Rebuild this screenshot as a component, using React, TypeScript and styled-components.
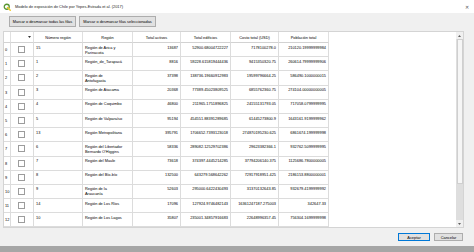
import { Fragment } from 'react';
import styled, { createGlobalStyle } from 'styled-components';

const GlobalStyle = createGlobalStyle`
  html, body {
    margin: 0;
    padding: 0;
    background: #a6a6a6;
  }
  body {
    font-family: "Liberation Sans", Arial, sans-serif;
    color: #000;
  }
  * {
    box-sizing: border-box;
  }
`;

const Window = styled.div`
  width: 474px;
  height: 246px;
  display: flex;
  flex-direction: column;
  background: #f0f0f0;
`;

const TitleBar = styled.div`
  height: 13px;
  display: flex;
  align-items: center;
  gap: 4px;
  padding: 0 5px 0 3px;
  background: #fff;
  font-size: 3.9px;
  color: #1a1a1a;
`;

const Title = styled.span`
  flex: 1;
`;

const CloseGlyph = styled.span`
  font-size: 5px;
  color: #555;
`;

const Toolbar = styled.div`
  height: 18px;
  display: flex;
  align-items: flex-start;
  gap: 3px;
  padding: 3px 0 0 9px;
`;

const Button = styled.button<{ $w: number; $h: number; $primary?: boolean }>`
  width: ${p => p.$w}px;
  height: ${p => p.$h}px;
  padding: 0;
  margin: 0;
  font-family: inherit;
  font-size: 3.9px;
  color: #000;
  background: #e1e1e1;
  border: 1px solid ${p => (p.$primary ? '#0078d7' : '#adadad')};
  border-radius: 0;
`;

const TableFrame = styled.div`
  height: 197px;
  margin: 0 10px 0 3px;
  display: flex;
  background: #fff;
  border: 1px solid #d4d4d4;
`;

const GridArea = styled.div`
  flex: 1;
  overflow: hidden;
`;

const Grid = styled.div`
  display: grid;
  grid-template-columns: 7px 23px 49px 50px 48px 50px 48px 50px;
  grid-template-rows: 11px;
  grid-auto-rows: 14.2px;
  width: 325px;
  font-size: 3.9px;
  line-height: 5px;
`;

const HeadCell = styled.div`
  display: flex;
  align-items: center;
  justify-content: center;
  position: relative;
  border-right: 1px solid #e0e0e0;
  border-bottom: 1px solid #d2d2d2;
  white-space: nowrap;
  overflow: hidden;
`;

const SortArrow = styled.svg`
  position: absolute;
  right: 2px;
  top: 4px;
`;

const Cell = styled.div<{ $align?: 'left' | 'right' }>`
  padding: 1.6px 2px 0 2px;
  text-align: ${p => p.$align ?? 'left'};
  border-right: 1px solid #dcdcdc;
  border-bottom: 1px solid #dcdcdc;
  white-space: pre;
  overflow: hidden;
`;

const RowHead = styled.div`
  display: flex;
  align-items: center;
  padding-left: 1px;
  border-right: 1px solid #dcdcdc;
  border-bottom: 1px solid #dcdcdc;
`;

const CheckCell = styled.div`
  display: flex;
  align-items: center;
  justify-content: center;
  padding-right: 2px;
  border-right: 1px solid #dcdcdc;
  border-bottom: 1px solid #dcdcdc;
`;

const CheckBox = styled.span`
  width: 7px;
  height: 7px;
  background: #fff;
  border: 1px solid #9c9c9c;
`;

const Scrollbar = styled.div`
  width: 7px;
  display: flex;
  flex-direction: column;
  background: #dedede;
`;

const ScrollArrow = styled.div`
  height: 7px;
  display: flex;
  align-items: center;
  justify-content: center;
  background: #f0f0f0;
`;

const Thumb = styled.div`
  height: 145px;
  background: #f6f6f6;
  border: 1px solid #cfcfcf;
  margin: 0 0.5px;
`;

const Track = styled.div`
  flex: 1;
`;

const Footer = styled.div`
  flex: 1;
  display: flex;
  justify-content: flex-end;
  align-items: flex-start;
  gap: 4px;
  padding: 5px 11px 0 0;
`;

const QgisIcon = () => (
  <svg width="8" height="8" viewBox="0 0 16 16">
    <circle cx="7.5" cy="7.5" r="5" fill="none" stroke="#589632" strokeWidth="2.6" />
    <path d="M9 9 L14.5 14.5" stroke="#f0c820" strokeWidth="2.8" strokeLinecap="round" />
  </svg>
);

const headers = ['Número región', 'Región', 'Total activos', 'Total edificios', 'Costo total (USD)', 'Población total'];

const rows: string[][] = [
  ['15', 'Región de Arica y\nParinacota', '13687', '52900.68004722227', '7178100278.0', '210120.19999999984'],
  ['1', 'Región_de_Tarapacá', '8816', '59228.615819444436', '9415350320.75', '260614.79999999906'],
  ['2', 'Región de\nAntofagasta', '37398', '138736.19660912983', '19599796664.25', '586490.1000000015'],
  ['3', 'Región de Atacama', '20368', '77389.45023809525', '6855762360.75', '274104.00000000005'],
  ['4', 'Región de Coquimbo', '46800', '211965.1751896825', '24155131793.05', '717058.0799999995'],
  ['5', 'Región de Valparaíso', '95194', '454551.88391289685', '61445273800.9', '1643161.9199999962'],
  ['13', 'Región Metropolitana', '395791', '1706652.7393123018', '274870195230.625', '6861674.199999998'],
  ['6', "Región del Libertador\nBernardo O'Higgins", '58336', '289082.12529702386', '29623382366.1', '932762.5099999995'],
  ['7', 'Región del Maule', '73618', '374397.4445214285', '37794206140.375', '1125686.7800000005'],
  ['8', 'Región del Bío-bío', '132500', '643279.568642262', '72917918951.425', '2186153.8800000001'],
  ['9', 'Región de la\nAraucanía', '52603', '295000.6422430493', '31370132643.85', '932679.4199999992'],
  ['14', 'Región de Los Ríos', '17096', '127924.9746482143', '16361247187.275003', '342647.33'],
  ['10', 'Región de Los Lagos', '35807', '235001.34857916683', '22648996357.45', '756304.1699999998'],
];

const App = () => {
  return (
    <>
      <GlobalStyle />
      <Window>
        <TitleBar>
          <QgisIcon />
          <Title>Modelo de exposición de Chile por Yepes-Estrada et al. (2017)</Title>
          <CloseGlyph>✕</CloseGlyph>
        </TitleBar>
        <Toolbar>
          <Button type="button" $w={67} $h={11}>
            Marcar o desmarcar todas las filas
          </Button>
          <Button type="button" $w={77} $h={11}>
            Marcar o desmarcar filas seleccionadas
          </Button>
        </Toolbar>
        <TableFrame>
          <GridArea>
            <Grid>
              <HeadCell />
              <HeadCell>
                <SortArrow width="3" height="2" viewBox="0 0 6 4">
                  <path d="M0 0 H6 L3 4 Z" fill="#333" />
                </SortArrow>
              </HeadCell>
              {headers.map(h => (
                <HeadCell key={h}>{h}</HeadCell>
              ))}
              {rows.map((r, i) => (
                <Fragment key={i}>
                  <RowHead>{i}</RowHead>
                  <CheckCell>
                    <CheckBox />
                  </CheckCell>
                  <Cell>{r[0]}</Cell>
                  <Cell>{r[1]}</Cell>
                  <Cell $align="right">{r[2]}</Cell>
                  <Cell $align="right">{r[3]}</Cell>
                  <Cell $align="right">{r[4]}</Cell>
                  <Cell $align="right">{r[5]}</Cell>
                </Fragment>
              ))}
            </Grid>
          </GridArea>
          <Scrollbar>
            <ScrollArrow>
              <svg width="3" height="2" viewBox="0 0 6 4">
                <path d="M0 4 H6 L3 0 Z" fill="#606060" />
              </svg>
            </ScrollArrow>
            <Thumb />
            <Track />
            <ScrollArrow>
              <svg width="3" height="2" viewBox="0 0 6 4">
                <path d="M0 0 H6 L3 4 Z" fill="#606060" />
              </svg>
            </ScrollArrow>
          </Scrollbar>
        </TableFrame>
        <Footer>
          <Button type="button" $w={32} $h={8} $primary>
            Aceptar
          </Button>
          <Button type="button" $w={29} $h={8}>
            Cancelar
          </Button>
        </Footer>
      </Window>
    </>
  );
};

export default App;
